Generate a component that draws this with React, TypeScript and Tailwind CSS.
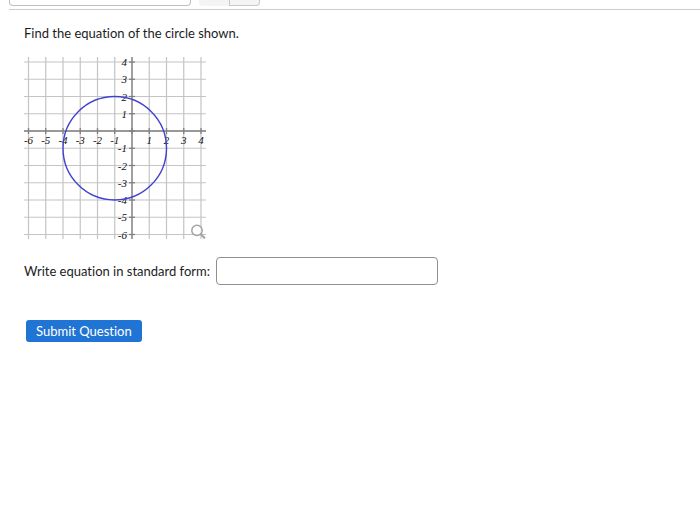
import React, { useState } from 'react';

const STEP = 17.25;
const ORIGIN_X = 108;
const ORIGIN_Y = 74;
const SIZE = 182;

const ticks = [-6, -5, -4, -3, -2, -1, 0, 1, 2, 3, 4];

const toX = (x: number) => ORIGIN_X + x * STEP;
const toY = (y: number) => ORIGIN_Y - y * STEP;

function CircleGraph() {
  return (
    <svg
      className="block"
      width={SIZE}
      height={SIZE}
      viewBox={`0 0 ${SIZE} ${SIZE}`}
      role="img"
      aria-label="Graph of a circle"
    >
      {/* grid */}
      <g stroke="#c4c4c4" strokeWidth="1.2">
        {ticks.map((t) => (
          <g key={t}>
            <line x1={toX(t)} x2={toX(t)} y1="0" y2={SIZE} />
            <line x1="0" x2={SIZE} y1={toY(t)} y2={toY(t)} />
          </g>
        ))}
      </g>

      {/* axes */}
      <g stroke="#808080" strokeWidth="1.3">
        <line x1={ORIGIN_X} x2={ORIGIN_X} y1="0" y2={SIZE} />
        <line x1="0" x2={SIZE} y1={ORIGIN_Y} y2={ORIGIN_Y} />
        {ticks.map((t) => (
          <g key={t}>
            <line x1={toX(t)} x2={toX(t)} y1={ORIGIN_Y - 3} y2={ORIGIN_Y + 3} />
            <line x1={ORIGIN_X - 3} x2={ORIGIN_X + 3} y1={toY(t)} y2={toY(t)} />
          </g>
        ))}
      </g>

      <g className="font-['Liberation_Serif',serif] text-[11px] italic" fill="#111111">
        {ticks.filter((t) => t !== 0).map((t) => (
          <g key={t}>
            <text x={toX(t)} y={ORIGIN_Y + 13} textAnchor="middle">{t}</text>
            <text x={ORIGIN_X - 5} y={toY(t) + 4} textAnchor="end">{t}</text>
          </g>
        ))}
      </g>

      <circle cx={toX(-1)} cy={toY(-1)} r={STEP * 3} fill="none" stroke="#4242d2" strokeWidth="1.4" />
    </svg>
  );
}

export default function App() {
  const [answer, setAnswer] = useState('');

  return (
    <div className="min-h-screen bg-white font-['Lato',sans-serif] text-[13px] leading-5 text-[#1c1c1c] [font-variant-ligatures:none]">
      <header className="ml-[9px] flex h-[10px] items-start gap-2 border-b border-[#cccccc]">
        <div className="h-[6px] w-[182px] rounded-b border border-t-0 border-[#c0c0c0]" />
        <div className="flex">
          <div className="h-[6px] w-[30px] rounded-bl bg-[#f4f4f4]" />
          <div className="h-[6px] w-[31px] rounded-br border border-t-0 border-[#c8c8c8] bg-[#f4f4f4]" />
        </div>
      </header>

      <main className="px-6 pt-[13px]">
        <p>Find the equation of the circle shown.</p>

        <div className="relative mt-[14px] w-fit">
          <CircleGraph />
          <button type="button" aria-label="Enlarge graph" className="absolute right-0 bottom-0">
            <svg className="block" width="16" height="16" viewBox="0 0 16 16" fill="none">
              <circle cx="7" cy="7.4" r="5.2" fill="#ffffff" fillOpacity="0.6" stroke="#a3a3a3" strokeWidth="1.5" />
              <path d="M10.8 11.2L14.4 14.8" stroke="#a3a3a3" strokeWidth="2" strokeLinecap="round" />
            </svg>
          </button>
        </div>

        <div className="mt-[18px] flex items-center gap-1.5">
          <label htmlFor="answer">Write equation in standard form:</label>
          <input
            id="answer"
            type="text"
            value={answer}
            onChange={(e) => setAnswer(e.target.value)}
            className="h-7 w-[222px] rounded border border-[#8f8f8f] bg-white px-2 outline-none"
          />
        </div>

        <button type="submit" className="mt-[35px] ml-[2px] h-[22px] rounded-[3px] bg-[#1f74d4] px-[10px] text-white">
          Submit Question
        </button>
      </main>
    </div>
  );
}
